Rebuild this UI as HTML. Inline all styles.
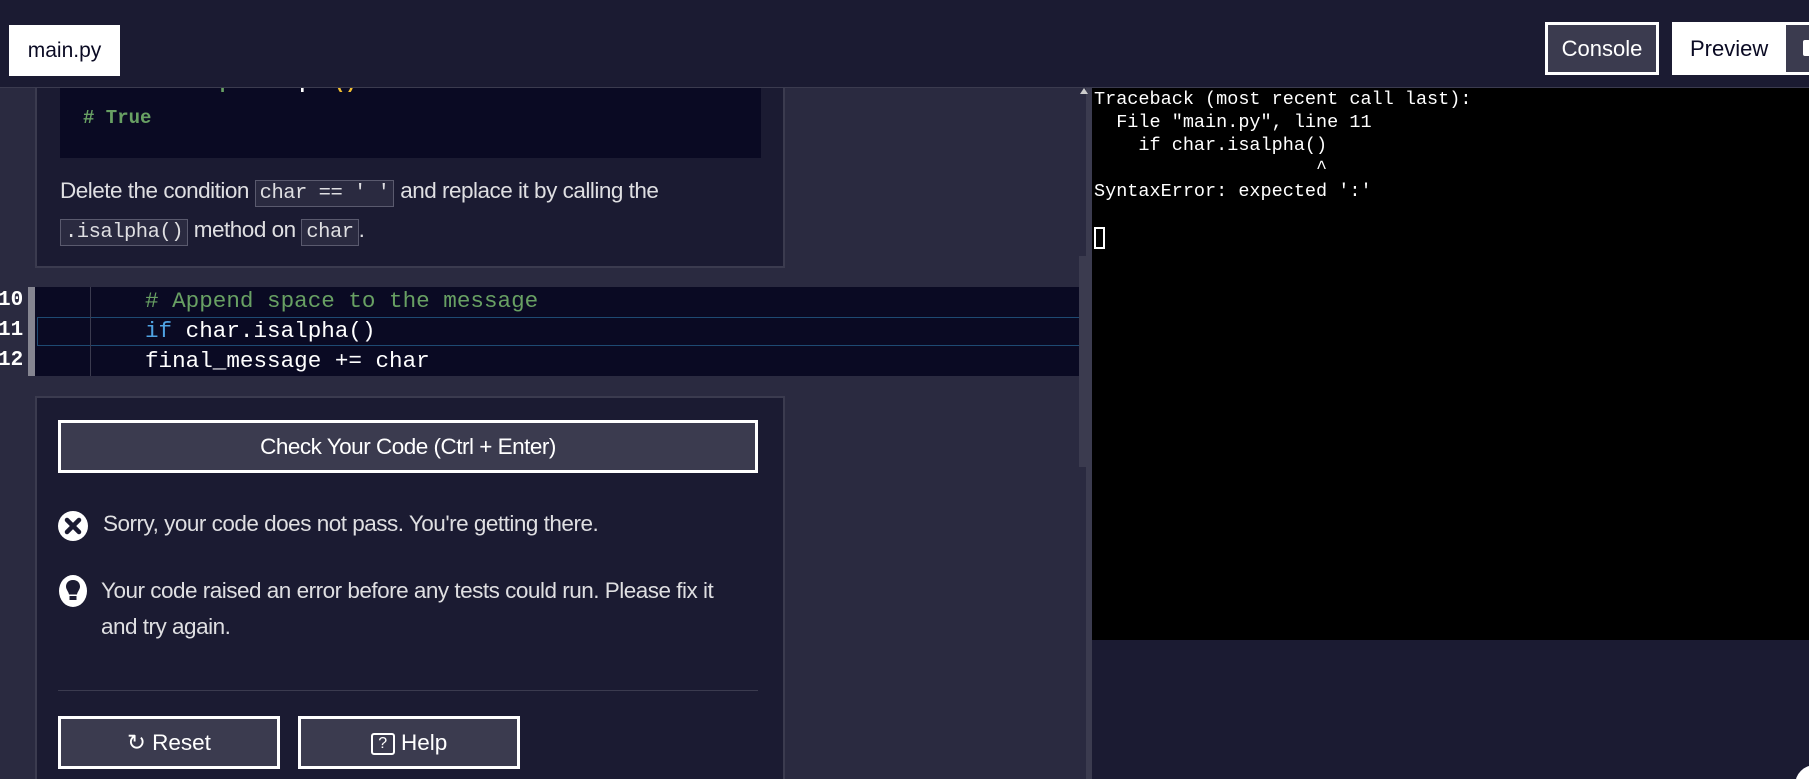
<!DOCTYPE html>
<html style="overflow:hidden;height:779px"><head><meta charset="utf-8"><style>
*{margin:0;padding:0;box-sizing:border-box}
body{width:1809px;height:779px;overflow:hidden;background:#2a2a40;position:relative;font-family:"Liberation Sans",sans-serif;color:#dfdfe2}
.abs{position:absolute}
.hdr{left:0;top:0;width:1809px;height:88px;background:#1b1b32;border-bottom:1px solid #3b3b4f}
.tab{left:9px;top:25px;width:111px;height:51px;background:#fff;color:#0a0a23;font-size:21px;line-height:51px;text-align:center}
.btn{border:3px solid #fff;background:#3b3b4f;color:#fff;text-align:center}
.mono{font-family:"Liberation Mono",monospace}
code{font-family:"Liberation Mono",monospace;font-size:20.5px;border:1px solid #5a5a6e;background:#2a2a40;padding:1px 4px;color:#dfdfe2}
.p{font-size:22.5px;color:#dfdfe2;letter-spacing:-0.5px}
.cl{position:absolute;left:145px;font-size:22.6px;height:30px;line-height:30px;white-space:pre}
.ln{position:absolute;left:-2px;font-size:21px;color:#fff;height:30px;line-height:30px;font-weight:bold}
.con{position:absolute;left:1094px;font-family:"Liberation Mono",monospace;font-size:18.5px;color:#fff;white-space:pre;line-height:23px}
</style></head><body>
<div class="abs hdr"></div>
<div class="abs tab">main.py</div>
<div class="abs btn" style="left:1545px;top:22px;width:114px;height:53px;font-size:22px;line-height:47px">Console</div>
<div class="abs" style="left:1672px;top:22px;width:140px;height:53px;background:#fff;color:#0a0a23;font-size:22px;line-height:53px;padding-left:18px">Preview</div>
<div class="abs" style="left:1786px;top:25px;width:30px;height:47px;background:#3b3b4f"></div>
<div class="abs" style="left:1803px;top:40px;width:10px;height:16px;background:#fff;border-radius:2px"></div>

<!-- instruction panel -->
<div class="abs" style="left:35px;top:88px;width:750px;height:180px;background:#1b1b32;border:2px solid #3b3b4f;border-top:none"></div>
<div class="abs" style="left:60px;top:88px;width:701px;height:70px;background:#0a0a23;overflow:hidden">
  <div class="mono" style="position:absolute;left:23px;top:-16px;font-size:19px;font-weight:bold;color:#68a063">"freecodecamp".<span style="color:#fff">isalpha</span><span style="color:#f1be32">()</span></div>
  <div class="mono" style="position:absolute;left:23px;top:19px;font-size:19px;font-weight:bold;color:#68a063"># True</div>
</div>
<div class="abs p" style="left:60px;top:173px;line-height:36px;width:720px">Delete the condition <code>char == ' '</code> and replace it by calling the<br><code>.isalpha()</code> method on <code>char</code>.</div>

<!-- editor -->
<div class="abs" style="left:28px;top:287px;width:7px;height:89px;background:#858591"></div>
<div class="abs" style="left:35px;top:287px;width:1050px;height:89px;background:#0a0a23"></div>
<div class="abs" style="left:37px;top:317px;width:1048px;height:29px;border:1px solid #1e4a72"></div>
<div class="abs" style="left:90px;top:287px;width:1px;height:89px;background:#3b3b4f"></div>
<div class="ln mono" style="top:286px">10</div>
<div class="ln mono" style="top:316px">11</div>
<div class="ln mono" style="top:346px">12</div>
<div class="cl mono" style="top:286px;color:#68a063"># Append space to the message</div>
<div class="cl mono" style="top:316px;color:#fff"><span style="color:#4fa3e3">if</span> char.isalpha()</div>
<div class="cl mono" style="top:346px;color:#fff">final_message += char</div>
<div class="abs" style="left:1079px;top:256px;width:7px;height:211px;background:#3b3b4f"></div>
<div class="abs" style="left:1086px;top:88px;width:6px;height:691px;background:#3b3b4f"></div>
<div class="abs" style="left:1080px;top:88px;width:0;height:0;border-left:4px solid transparent;border-right:4px solid transparent;border-bottom:6px solid #ccc"></div>

<!-- lower panel -->
<div class="abs" style="left:35px;top:396px;width:750px;height:383px;background:#1b1b32;border:2px solid #3b3b4f;border-bottom:none"></div>
<div class="abs btn" style="left:58px;top:420px;width:700px;height:53px;font-size:22.5px;line-height:47px;letter-spacing:-0.5px">Check Your Code (Ctrl + Enter)</div>
<svg class="abs" style="left:57px;top:510px" width="32" height="32" viewBox="0 0 32 32"><circle cx="16" cy="16" r="15" fill="#fff"/><path d="M10 10L22 22M22 10L10 22" stroke="#1b1b32" stroke-width="4.5" stroke-linecap="round"/></svg>
<div class="abs p" style="left:103px;top:511px">Sorry, your code does not pass. You're getting there.</div>
<svg class="abs" style="left:58px;top:574px" width="30" height="34" viewBox="0 0 30 34"><ellipse cx="15" cy="17" rx="14" ry="16" fill="#fff"/><path d="M15 6c-5 0-7 3.5-7 6.5 0 3 2.5 5 3 8h8c.5-3 3-5 3-8C22 9.5 20 6 15 6z" fill="#1b1b32"/><rect x="11.5" y="22" width="7" height="4" fill="#1b1b32"/></svg>
<div class="abs p" style="left:101px;top:573px;line-height:36px;width:680px">Your code raised an error before any tests could run. Please fix it<br>and try again.</div>
<div class="abs" style="left:58px;top:690px;width:700px;height:1px;background:#3b3b4f"></div>
<div class="abs btn" style="left:58px;top:716px;width:222px;height:53px;font-size:22.5px;line-height:47px">&#8635; Reset</div>
<div class="abs btn" style="left:298px;top:716px;width:222px;height:53px;font-size:22.5px;line-height:47px"><span style="display:inline-block;border:2px solid #fff;border-radius:3px;width:24px;height:22px;font-size:16px;line-height:18px;vertical-align:2px">?</span> Help</div>

<!-- console -->
<div class="abs" style="left:1092px;top:88px;width:717px;height:552px;background:#000"></div>
<div class="abs" style="left:1092px;top:640px;width:717px;height:139px;background:#1b1b32"></div>
<div class="con" style="top:88px">Traceback (most recent call last):
  File "main.py", line 11
    if char.isalpha()
                    ^
SyntaxError: expected ':'</div>
<div class="abs" style="left:1094px;top:227px;width:11px;height:22px;border:2px solid #fff"></div>
<div class="abs" style="left:1795px;top:765px;width:40px;height:40px;border-radius:50%;background:#fff"></div>
</body></html>
